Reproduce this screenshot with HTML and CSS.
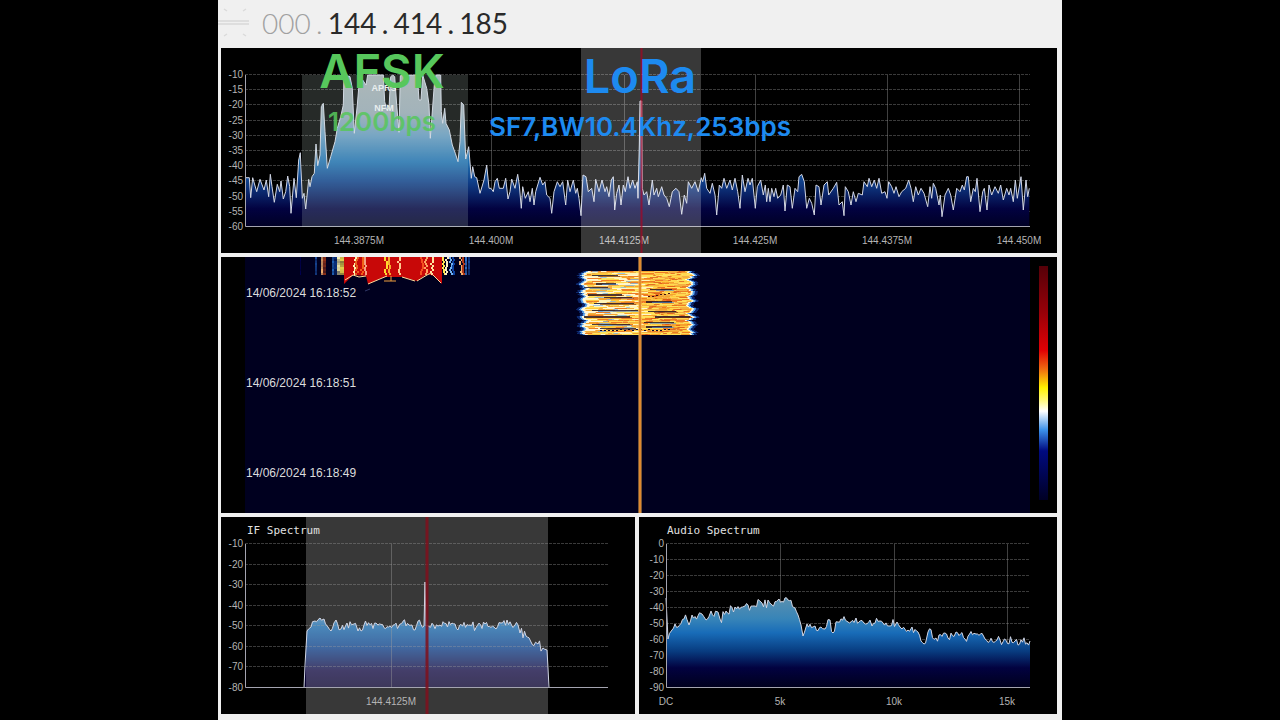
FILE: index.html
```html
<!DOCTYPE html>
<html lang="en">
<head>
<meta charset="utf-8">
<title>Spectrum receiver</title>
<link rel="stylesheet" href="styles.css">
</head>
<body>
<main class="receiver">
  <header class="tuner">
    <svg class="tuner-icon" viewBox="0 0 32 40" aria-hidden="true">
      <path d="M0 18h31M0 21h31" stroke="#dedede" stroke-width="2"/>
      <path d="M6 6l3 2M28 6l-3 2M6 33l3-2M28 33l-3-2" stroke="#dadada" stroke-width="1.500"/>
    </svg>
    <div class="frequency"><span class="leading">000<span class="dot">.</span></span>144<span class="dot">.</span>414<span class="dot">.</span>185</div>
  </header>
  <div class="panels">
    <svg class="panel" viewBox="221 48 836 205" role="img" aria-label="Main spectrum">
      <defs>
        <linearGradient id="power" gradientUnits="userSpaceOnUse" x1="0" y1="75" x2="0" y2="227">
          <stop offset="0" stop-color="#a4acb0"/><stop offset=".25" stop-color="#98a8b2"/>
          <stop offset=".4" stop-color="#6498be"/><stop offset=".57" stop-color="#2070b0"/>
          <stop offset=".7" stop-color="#10408a"/><stop offset=".88" stop-color="#020240"/>
          <stop offset="1" stop-color="#000024"/>
        </linearGradient>
      </defs>
      <g id="main-grid"></g>
      <g id="main-trace"></g>
      <rect x="302" y="75" width="166" height="152" fill="#d0e8e0" opacity=".18"/>
      <rect x="581" y="48" width="120" height="205" fill="#fff" opacity=".22"/>
      <path d="M641.500 48V253" stroke="#b00020" stroke-width="2" opacity=".65"/>
      <text class="tag" x="384" y="91">APRS</text>
      <text class="tag" x="384" y="111">NFM</text>
      <text class="mode green big" x="382" y="88">AFSK</text>
      <text class="mode green small faded" x="382" y="131">1200bps</text>
      <text class="mode blue big" x="640" y="93">LoRa</text>
      <text class="mode blue small" x="640" y="136">SF7,BW10.4Khz,253bps</text>
    </svg>
    <svg class="panel" viewBox="221 257 836 256" role="img" aria-label="Waterfall">
      <defs>
        <linearGradient id="scale" x1="0" y1="0" x2="0" y2="1">
          <stop offset="0" stop-color="#550008"/><stop offset=".2" stop-color="#980008"/>
          <stop offset=".36" stop-color="#e00004"/><stop offset=".44" stop-color="#f06a10"/>
          <stop offset=".52" stop-color="#fff200"/><stop offset=".57" stop-color="#fff870"/>
          <stop offset=".62" stop-color="#fff"/><stop offset=".7" stop-color="#3c92ea"/>
          <stop offset=".79" stop-color="#000a80"/><stop offset="1" stop-color="#000024"/>
        </linearGradient>
      </defs>
      <rect x="245" y="257" width="785" height="256" fill="#00001f"/>
      <g id="bursts"></g>
      <path d="M640 257V513" stroke="#f5ae4c" stroke-width="3"/>
      <path d="M640 257V513" stroke="#c86414" stroke-width="1"/>
      <rect x="1039" y="266" width="9" height="234" fill="url(#scale)"/>
      <text class="stamp" x="246" y="297">14/06/2024 16:18:52</text>
      <text class="stamp" x="246" y="387">14/06/2024 16:18:51</text>
      <text class="stamp" x="246" y="477">14/06/2024 16:18:49</text>
    </svg>
    <div class="lower">
      <svg class="panel" viewBox="221 517 414 197" role="img" aria-label="IF Spectrum">
        <defs>
          <linearGradient id="if-power" gradientUnits="userSpaceOnUse" x1="0" y1="580" x2="0" y2="688">
            <stop offset="0" stop-color="#b8b8c0"/><stop offset=".33" stop-color="#5088b0"/><stop offset=".42" stop-color="#1868a8"/>
            <stop offset=".62" stop-color="#0c4088"/><stop offset=".84" stop-color="#100840"/><stop offset="1" stop-color="#06002c"/>
          </linearGradient>
        </defs>
        <g id="if-trace-fill"></g>
        <rect x="306" y="517" width="242" height="197" fill="#fff" opacity=".22"/>
        <g id="if-grid"></g>
        <g id="if-trace"></g>
        <path d="M427 517V714" stroke="#80101c" stroke-width="3" opacity=".85"/>
        <text class="title" x="247" y="534">IF Spectrum</text>
      </svg>
      <svg class="panel" viewBox="639 517 418 197" role="img" aria-label="Audio Spectrum">
        <defs>
          <linearGradient id="audio-power" gradientUnits="userSpaceOnUse" x1="0" y1="596" x2="0" y2="688">
            <stop offset="0" stop-color="#5d91ae"/><stop offset=".25" stop-color="#3784b8"/><stop offset=".4" stop-color="#186cb8"/>
            <stop offset=".6" stop-color="#083c80"/><stop offset=".78" stop-color="#020240"/><stop offset="1" stop-color="#00001c"/>
          </linearGradient>
        </defs>
        <g id="audio-grid"></g>
        <g id="audio-trace"></g>
        <text class="title" x="667" y="534">Audio Spectrum</text>
      </svg>
    </div>
  </div>
</main>
<script src="charts.js"></script>
</body>
</html>
```
FILE: styles.css
```css
* {
  box-sizing: border-box;
}

body {
  margin: 0;
  background: #000;
  font-family: "Liberation Sans", Arial, sans-serif;
}

.receiver {
  width: min(100%, calc(100vh * 844 / 720));
  margin: 0 auto;
  background: #f0f0f0;
}

.tuner {
  display: flex;
  align-items: center;
  gap: 12px;
  height: 48px;
  padding-bottom: 2px;
  color: #2a2a2a;
}

.tuner-icon {
  width: 32px;
  height: 40px;
  fill: none;
}

.frequency {
  font: 400 28px/46px Lato, sans-serif;
  white-space: nowrap;
}

.leading {
  font-weight: 300;
  color: #a0a0a0;
}

.dot {
  display: inline-block;
  width: 17px;
  text-align: center;
}

.panels {
  display: flex;
  flex-direction: column;
  gap: 4px;
  padding: 0 5px 6px 3px;
}

.lower {
  display: grid;
  grid-template-columns: 414fr 418fr;
  gap: 4px;
}

.panel {
  display: block;
  width: 100%;
  height: auto;
  background: #000;
}

.grid-line {
  stroke: #a0a0a0;
  stroke-opacity: 0.36;
  stroke-dasharray: 3 1;
}

.grid-column {
  stroke: #a0a0a0;
  stroke-opacity: 0.4;
}

.axis {
  stroke: #a4a4b0;
  fill: none;
}

.label {
  font-size: 10px;
  fill: #b4b4b4;
}

.end {
  text-anchor: end;
}

.middle {
  text-anchor: middle;
}

.trace {
  fill: none;
  stroke: #d2d6e4;
  stroke-width: 1;
  stroke-linejoin: round;
}

.stamp {
  font-size: 12px;
  fill: #dcdcdc;
}

.title {
  font: 11px "DejaVu Sans Mono", monospace;
  fill: #e0e0e0;
}

.tag {
  font-size: 9px;
  font-weight: bold;
  fill: #e8eeee;
  text-anchor: middle;
}

.mode {
  font-family: Inter, sans-serif;
  font-weight: 600;
  text-anchor: middle;
}

.big {
  font-size: 47px;
}

.small {
  font-size: 26px;
}

.green {
  fill: #57c75c;
}

.blue {
  fill: #1d8af0;
}

.faded {
  opacity: 0.85;
}
```
FILE: charts.js
```js
const NS = "http://www.w3.org/2000/svg";

function add(parent, tag, attrs, text) {
  const node = document.createElementNS(NS, tag);
  for (const key in attrs) node.setAttribute(key, attrs[key]);
  if (text) node.textContent = text;
  parent.appendChild(node);
}

let seed = 7;
function random() {
  seed = (seed * 16807) % 2147483647;
  return seed / 2147483647;
}

function grid(id, box, levels, columns, labelY) {
  const g = document.getElementById(id);
  levels.forEach((level, i) => {
    const y = box.top + (box.bottom - box.top) * i / (levels.length - 1);
    if (i < levels.length - 1) {
      add(g, "path", { class: "grid-line", d: `M${box.left} ${Math.round(y) - 0.5}H${box.right}` });
    }
    add(g, "text", { class: "label end", x: box.left - 2, y: Math.round(y) + 3 }, String(level));
  });
  columns.forEach(([x, label, line]) => {
    if (line) add(g, "path", { class: "grid-column", d: `M${x + 0.5} ${box.top}V${box.bottom}` });
    add(g, "text", { class: "label middle", x: x, y: labelY }, label);
  });
}

function axis(id, box) {
  add(document.getElementById(id), "path", {
    class: "axis", d: `M${box.left + 0.5} ${box.top}V${box.bottom - 0.5}H${box.right}`
  });
}

function trace(id, points, bottom, fill, fillId) {
  const line = points.map(p => p[0].toFixed(1) + " " + p[1].toFixed(1)).join("L");
  const last = points[points.length - 1][0];
  add(document.getElementById(fillId || id), "path", {
    d: `M${points[0][0]} ${bottom}L${line}L${last} ${bottom}Z`, fill: `url(#${fill})`
  });
  add(document.getElementById(id), "path", { class: "trace", d: "M" + line });
}

function parse(text, ox, oy, scale) {
  return text.trim().split(/\s+/).map(pair => {
    const [x, y] = pair.split(",").map(Number);
    return [ox + x / scale, oy + y / scale];
  });
}

/* Add small ripples between the points of an envelope. */
function ripple(points, from, to, amount) {
  const out = [];
  for (let i = 0; i < points.length - 1; i++) {
    const [x0, y0] = points[i], [x1, y1] = points[i + 1];
    out.push(points[i]);
    if (x0 < from || x1 > to) continue;
    for (let x = x0 + 1.5; x < x1 - 1; x += 1.5) {
      const y = y0 + (y1 - y0) * (x - x0) / (x1 - x0);
      out.push([x, y + (random() + random() - 1) * amount]);
    }
  }
  out.push(points[points.length - 1]);
  return out;
}

/* Main spectrum */
const main = [
  ...parse(`76,398 88,398 92,458 98,398 110,440 120,403 132,435 139,405 146,455 151,388 156,425 163,472
    172,418 179,440 183,408 190,462 197,440 203,393 209,425 213,505 222,400 229,458 236,345 241,323 247,460
    252,445 257,492 266,403 270,425 276,395 283,385 288,297 293,362 300,330 304,185 310,175 315,260 322,370
    332,335 345,290 352,250 362,215 370,180 372,90 390,95 397,130 403,265 412,180 416,130 428,105 438,120
    443,90 490,90 494,170 500,195 507,190 512,95 518,90 524,95 530,180 537,262 541,92 592,90 597,165 603,165
    608,90 620,130 627,180 631,280 643,120 648,90 662,90 664,200 668,235 674,190 678,235 688,255 697,300
    706,325 714,350 720,290 724,172 731,180 737,342 746,305 754,400 758,365 764,395 770,398 780,445 792,405
    800,360 807,430`, 220, 45, 3),
  ...parse(`30,430 33,430 40,440 45,410 52,400 58,430 70,430 77,400 84,462 90,440 95,402 105,430 113,388
    118,420 124,490 128,425 136,460 145,440 150,470 157,430 162,480 167,440 180,397 188,420 195,410 200,450
    210,460 215,505 222,440 232,410 240,425 248,410 257,480 263,405 270,440 280,405 287,445 292,430 297,460
    303,512 309,390 318,395 325,440 335,430 342,470 347,403 357,440 366,405 375,440 380,425 387,455 394,405
    400,395 404,495 410,445 417,420 423,480 430,420 436,440 444,395 450,430 458,405 465,430 472,410 474,460
    478,300 480,168 485,168 487,430 492,450 500,440 507,480 517,405 522,450 530,430 535,455 545,425 552,450
    560,460 568,485 577,440 588,430 597,440 605,508 613,450 620,475 625,410 635,430 645,410 655,440 664,398
    668,410 674,385 680,430 690,445 697,415 705,450 710,510 718,420 725,430 732,400 740,430 750,405 757,435
    765,400 773,440`, 480, 45, 3),
  ...parse(`0,490 7,390 15,440 24,400 30,420 37,400 46,490 52,425 62,405 70,450 76,420 80,470 85,430 90,470
    95,430 102,455 107,430 113,460 122,450 130,420 135,498 142,420 150,425 157,490 165,430 173,440 177,395
    185,388 193,410 200,490 208,460 215,475 223,510 228,420 237,425 243,480 252,420 262,410 266,450 280,430
    290,412 297,480 307,470 312,512 316,425 325,440 333,480 340,440 348,470 355,445 367,450 372,410 382,425
    387,400 395,425 403,405 410,430 417,400 425,445 435,440 441,460 446,410 455,425 462,445 468,425 477,455
    485,440 497,430 506,405 513,430 520,470 527,425 535,450 543,430 552,445 563,485 570,425 575,460 580,415
    587,430 597,480 601,450 606,515 615,450 625,430 632,450 640,495 650,430 660,440 667,420 673,435 680,395
    685,395 692,470 700,430 706,440 711,400 720,500 728,440 733,430 741,495 747,420 755,450 765,425 775,445
    782,420 790,465 800,430 807,450 812,430 820,470 826,405 832,460 843,395 850,495 858,405 863,455 868,430`,
    740, 45, 3)
];
const mainBox = { left: 245, right: 1030, top: 75, bottom: 227 };
grid("main-grid", mainBox,
  [-10, -15, -20, -25, -30, -35, -40, -45, -50, -55, -60],
  [[359, "144.3875M", 1], [491, "144.400M", 1], [624, "144.4125M", 1], [755, "144.425M", 1],
   [887, "144.4375M", 1], [1019, "144.450M", 1]], 244);
trace("main-trace", main, 227, "power");
axis("main-trace", mainBox);

/* IF spectrum */
const ifBox = { left: 245, right: 608, top: 544, bottom: 688 };
grid("if-grid", ifBox,
  [-10, -20, -30, -40, -50, -60, -70, -80], [[391, "144.4125M", 1]], 705);
const ifPoints = parse(`304,688 305,665 307,631 311,627 315,621 320,618 324,619 328,627 331,631 336,620 341,629
  347,623 354,624 358,631 364,625 378,625 390,626 400,624 412,625 424,626 425,582 426,626 440,625 455,624
  470,625 485,624 496,629 501,623 507,620 515,625 520,633 526,636 531,642 538,644 543,648 547,650 548,668
  549,688`, 0, 0, 1);
trace("if-trace", ripple(ifPoints, 307, 547, 6), 688, "if-power", "if-trace-fill");
axis("if-trace", ifBox);

/* Audio spectrum */
const audioBox = { left: 666, right: 1030, top: 544, bottom: 688 };
grid("audio-grid", audioBox,
  [0, -10, -20, -30, -40, -50, -60, -70, -80, -90],
  [[666, "DC", 0], [780, "5k", 1], [894, "10k", 1], [1007, "15k", 1]], 705);
const audio = parse(`666,598 668,639 672,630 678,627 684,619 689,625 692,615 702,614 706,620 711,611 718,612
  720,619 726,611 735,607 745,606 755,606 762,603 772,605 779,599 788,600 795,608 798,615 801,625 803,636
  807,624 815,626 825,629 830,620 833,633 838,622 848,622 856,618 864,623 872,626 880,621 890,626 897,622
  902,629 912,627 918,632 924,644 928,632 936,638 945,633 948,638 956,632 965,639 976,634 985,639 1000,640
  1015,641 1030,641`, 0, 0, 1);
trace("audio-trace", ripple(audio, 668, 1030, 6), 688, "audio-power");
axis("audio-trace", audioBox);

/* Waterfall: AFSK burst */
const bursts = document.getElementById("bursts");
function cell(x, y, width, height, fill, opacity) {
  add(bursts, "rect", { x, y, width, height, fill, opacity: opacity || 1 });
}
const columns = [
  [300, 1, "#000058"], [315, 2, "#1a50a8"], [321, 2, "#f4b070"], [323, 3, "#903018"], [332, 2, "#2470d0"],
  [334, 3, "#0a3080"], [337, 3, "#f8f0b0"], [340, 4, "#ffe850"],
  [465, 2, "#3470c8"], [468, 2, "#1448a0"]
];
columns.forEach(([x, w, c]) => {
  for (let y = 257; y < 275; y += 2) cell(x, y, w, 2, c, 0.5 + random() * 0.5);
});
add(bursts, "path", { d: "M344 257H442V284L434 276L427 274L417 281L402 277H384L368 284L366 276L353 275L344 284Z",
  fill: "#c80808" });
[[353, "#fff0b0"], [355, "#e86020"], [360, "#f06018"], [364, "#f4a080"], [384, "#ffd830"], [387, "#f8a830"],
 [397, "#ffc890"], [420, "#f45020"], [424, "#ffa060"], [430, "#ffe4a0"],
 [442, "#ffe850"], [445, "#fff0c0"], [449, "#70b0f0"], [452, "#0c40a0"], [459, "#f0b070"], [462, "#b03818"]]
  .forEach(([x, c]) => {
    for (let y = 257; y < 275; y += 2) cell(x + Math.floor(random() * 3), y, 2, 2, c);
  });
add(bursts, "path", { d: "M345 280L353 275L359 277L366 276M368 284L387 276M402 277L415 281M417 281L427 275L431 273L441 283",
  fill: "none", stroke: "#ffdc9c" });
add(bursts, "path", { d: "M384 281H396M391 276V281", stroke: "#f0a040" });
add(bursts, "path", { d: "M365 291L370 289", stroke: "#303868" });

/* Waterfall: LoRa burst, one band of the palette for each row */
const warm = ["#ffe45c", "#ffc83c", "#f6a22c", "#ffd850", "#f4b040", "#ee7c24", "#fff4b8", "#fff6d0"];
const bands = [[271, 8], [279, 9], [288, 8], [296, 8], [304, 10], [314, 6], [320, 9], [329, 6]];
bands.forEach(([top, height]) => {
  for (let y = top; y < top + height; y++) {
    const edge = Math.abs(y - top - height / 2) * 1.2;
    const left = 575 + edge + random() * 3;
    const right = 700 - edge - random() * 3;
    cell(left, y, right - left, 1, "#1440a0", 0.6);
    cell(left + 3, y, right - left - 6, 1, "#58a4f0");
    cell(left + 5, y, right - left - 10, 1, "#fff8dc");
    for (let x = left + 8; x < right - 8;) {
      const w = 4 + random() * 12;
      const skip = x > 640 ? 2 : 0;
      const pick = Math.floor(random() * (warm.length - skip));
      cell(x, y, Math.min(w, right - 7 - x), 1, warm[pick]);
      x += w;
    }
    if (y % 2) cell(592 + random() * 40, y, 3 + random() * 9, 1, "#70b4f4", 0.7);
    cell(645 + random() * 35, y, 2 + random() * 7, 1, "#d84c14", 0.7);
  }
});
[[588, 294, 34], [584, 287, 24], [592, 275, 26], [596, 283, 20], [594, 303, 40], [592, 310, 46], [584, 316, 46],
 [592, 324, 38], [600, 328, 36], [646, 301, 26], [648, 311, 28], [644, 322, 30], [655, 316, 35], [650, 289, 22],
 [604, 297, 28], [646, 326, 26]]
  .forEach(([x, y, w], i) => {
    cell(x, y, w, i % 3 ? 1 : 2, "#181028", 0.8);
    cell(x + 6, y + 1, w - 4, 1, i % 2 ? "#5090d8" : "#702814", 0.6);
  });
for (let x = 600; x < 672; x += 4) {
  cell(x, 329 + Math.round(random()), 2, 1, "#080830");
  if (x > 644) cell(x, 297 - Math.round((x - 644) / 6), 2, 1, "#401010");
}
```
